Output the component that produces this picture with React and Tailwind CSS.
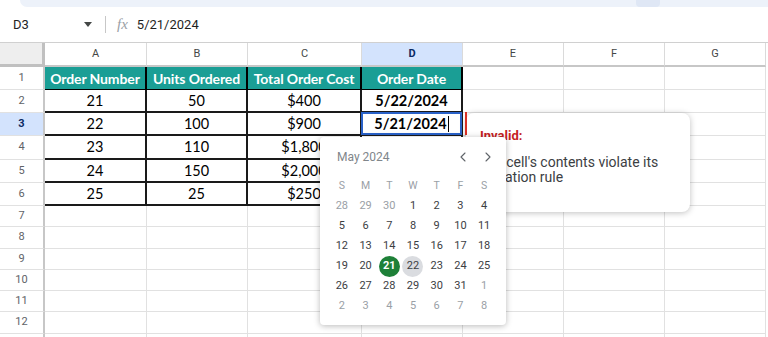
import React from "react";
import { ChevronLeft, ChevronRight } from "lucide-react";

const COLS = [
  { k: "A", w: "w-[102px]" },
  { k: "B", w: "w-[101px]" },
  { k: "C", w: "w-[114px]" },
  { k: "D", w: "w-[101px]" },
  { k: "E", w: "w-[101px]" },
  { k: "F", w: "w-[101px]" },
  { k: "G", w: "w-[101px]" },
];

const DATA = [
  ["21", "50", "$400", "5/22/2024"],
  ["22", "100", "$900", "5/21/2024"],
  ["23", "110", "$1,800", ""],
  ["24", "150", "$2,000", ""],
  ["25", "25", "$250", ""],
];

const HEAD = ["Order Number", "Units Ordered", "Total Order Cost", "Order Date"];

const ROW_H = ["h-[23px]", "h-[23px]", "h-[23px]", "h-[24px]", "h-[23px]", "h-[23px]"];
const EMPTY_H = ["h-[21px]", "h-[22px]", "h-[21px]", "h-[21px]", "h-[21px]", "h-[22px]", "h-[22px]"];

const dataFont = { fontFamily: "Lato, 'Open Sans', sans-serif" };

function RowHeader({ n, active, h }) {
  return (
    <div
      className={`w-[45px] shrink-0 ${h} flex items-center justify-center border-r-2 border-b border-r-[#c7c7c7] border-b-[#e1e1e1] text-[11px] ${
        active ? "bg-[#d3e3fd] text-[#0b2a63] font-bold" : "bg-white text-[#5f6368]"
      }`}
    >
      {n}
    </div>
  );
}

function Calendar() {
  const weeks = [
    [["28", 1], ["29", 1], ["30", 1], ["1"], ["2"], ["3"], ["4"]],
    [["5"], ["6"], ["7"], ["8"], ["9"], ["10"], ["11"]],
    [["12"], ["13"], ["14"], ["15"], ["16"], ["17"], ["18"]],
    [["19"], ["20"], ["21", 0, "sel"], ["22", 0, "today"], ["23"], ["24"], ["25"]],
    [["26"], ["27"], ["28"], ["29"], ["30"], ["31"], ["1", 1]],
    [["2", 1], ["3", 1], ["4", 1], ["5", 1], ["6", 1], ["7", 1], ["8", 1]],
  ];
  return (
    <div className="absolute left-[320px] top-[137px] w-[186px] h-[188px] bg-white rounded-[4px] shadow-[0_1px_6px_rgba(0,0,0,0.28)] pt-[12px] pl-[10px] pr-[10px]">
      <div className="flex items-center h-[16px]">
        <span className="text-[12px] text-[#80868b] pl-[7px]">May 2024</span>
        <div className="ml-auto flex items-center gap-[9px] text-[#5f6368]">
          <ChevronLeft size={16} strokeWidth={1.6} />
          <ChevronRight size={16} strokeWidth={1.6} />
        </div>
      </div>
      <div className="grid grid-cols-7 w-[166px] mt-[11px]">
        {["S", "M", "T", "W", "T", "F", "S"].map((d, i) => (
          <div key={i} className="h-[20px] flex items-center justify-center text-[10.5px] text-[#9aa0a6]">
            {d}
          </div>
        ))}
        {weeks.flat().map(([d, out, kind], i) => (
          <div key={i} className="h-[20px] flex items-center justify-center">
            {kind === "sel" ? (
              <span className="w-[21px] h-[21px] rounded-full bg-[#1e8038] text-white text-[11px] font-bold flex items-center justify-center">
                {d}
              </span>
            ) : kind === "today" ? (
              <span className="w-[21px] h-[21px] rounded-full bg-[#dadce0] text-[#3c4043] text-[11px] flex items-center justify-center">
                {d}
              </span>
            ) : (
              <span className={`text-[11px] ${out ? "text-[#9aa0a6]" : "text-[#3c4043]"}`}>{d}</span>
            )}
          </div>
        ))}
      </div>
    </div>
  );
}

function Tooltip() {
  return (
    <>
      <div className="absolute left-[466px] top-[113px] w-[224px] h-[99px] bg-white rounded-[8px] shadow-[0_1px_6px_rgba(0,0,0,0.25)] pl-[14px] pt-[15px]">
        <div className="text-[13px] leading-[16px] font-bold text-[#c5221f]">Invalid:</div>
        <div className="mt-[11px] text-[14px] leading-[15px] text-[#3c4043] -ml-[4px]">
          This cell's contents violate its
          <br />
          validation rule
        </div>
      </div>
      <div className="absolute left-[465px] top-[112px] w-[2px] h-[23px] bg-[#d93025]" />
    </>
  );
}

export default function App() {
  return (
    <div className="relative w-[768px] h-[337px] overflow-hidden bg-white" style={{ fontFamily: "Roboto, 'Liberation Sans', sans-serif" }}>
      {/* top toolbar remnant */}
      <div className="ml-[20px] h-[7px] bg-[#edf2fa] rounded-bl-[14px] flex">
        <div className="ml-[616px] w-[24px] h-[7px] bg-[#dfe7f5] rounded-b-[4px]" />
      </div>
      {/* formula bar */}
      <div className="h-[35px] flex items-center text-[13px] text-[#1f1f1f]">
        <span className="pl-[13px] w-[84px]">D3</span>
        <svg width="8" height="5" viewBox="0 0 8 5">
          <path d="M0 0 L8 0 L4 5 Z" fill="#444746" />
        </svg>
        <div className="ml-[13px] w-px h-[17px] bg-[#c7c7c7]" />
        <span className="ml-[11px] italic text-[#9aa0a6] text-[15px]" style={{ fontFamily: "'Liberation Serif', serif" }}>
          fx
        </span>
        <span className="ml-[9px]">5/21/2024</span>
      </div>
      {/* column headers */}
      <div className="flex h-[25px] border-t border-[#d0d0d0]">
        <div className="w-[45px] shrink-0 bg-[#eeeeee] border-r-[3px] border-b-[3px] border-[#c0c0c0]" />
        {COLS.map((c) => (
          <div
            key={c.k}
            className={`${c.w} shrink-0 flex items-center justify-center border-r border-b-2 border-r-[#dadada] border-b-[#c7c7c7] text-[11px] ${
              c.k === "D" ? "bg-[#d3e3fd] font-bold text-[#0b2a63]" : "text-[#444746]"
            }`}
          >
            {c.k}
          </div>
        ))}
      </div>
      {/* row 1 */}
      <div className={`flex ${ROW_H[0]}`}>
        <RowHeader n={1} h={ROW_H[0]} />
        {COLS.map((c, ci) =>
          ci < 4 ? (
            <div
              key={c.k}
              className={`${c.w} shrink-0 bg-[#1a9e95] text-white font-bold text-[14px] tracking-[-0.1px] flex items-center justify-center border-r-2 border-b border-black`}
              style={dataFont}
            >
              {HEAD[ci]}
            </div>
          ) : (
            <div key={c.k} className={`${c.w} shrink-0 border-r border-b border-[#e1e1e1]`} />
          )
        )}
      </div>
      {DATA.map((row, ri) => (
        <div key={ri} className={`flex ${ROW_H[ri + 1]}`}>
          <RowHeader n={ri + 2} h={ROW_H[ri + 1]} active={ri === 1} />
          {COLS.map((c, ci) =>
            ci < 4 ? (
              <div
                key={c.k}
                className={`${c.w} shrink-0 relative flex items-center justify-center border-r-2 border-b-2 border-[#1a1a1a] text-[14.5px] text-black ${
                  ci === 3 ? "font-bold" : ""
                }`}
                style={dataFont}
              >
                {row[ci]}
                {ri === 1 && ci === 3 && (
                  <>
                    <span className="w-px h-[16px] bg-black ml-px" />
                    <div className="absolute -left-[1px] -top-[1px] -right-[1px] -bottom-[1px] border-2 border-[#2a62c9]" />
                  </>
                )}
              </div>
            ) : (
              <div key={c.k} className={`${c.w} shrink-0 border-r border-b border-[#e1e1e1]`} />
            )
          )}
        </div>
      ))}
      {EMPTY_H.map((h, i) => (
        <div key={i} className={`flex ${h}`}>
          <RowHeader n={i < 6 ? i + 7 : ""} h={h} />
          {COLS.map((c) => (
            <div key={c.k} className={`${c.w} shrink-0 border-r border-b border-[#e1e1e1]`} />
          ))}
        </div>
      ))}
      <Tooltip />
      <Calendar />
    </div>
  );
}
